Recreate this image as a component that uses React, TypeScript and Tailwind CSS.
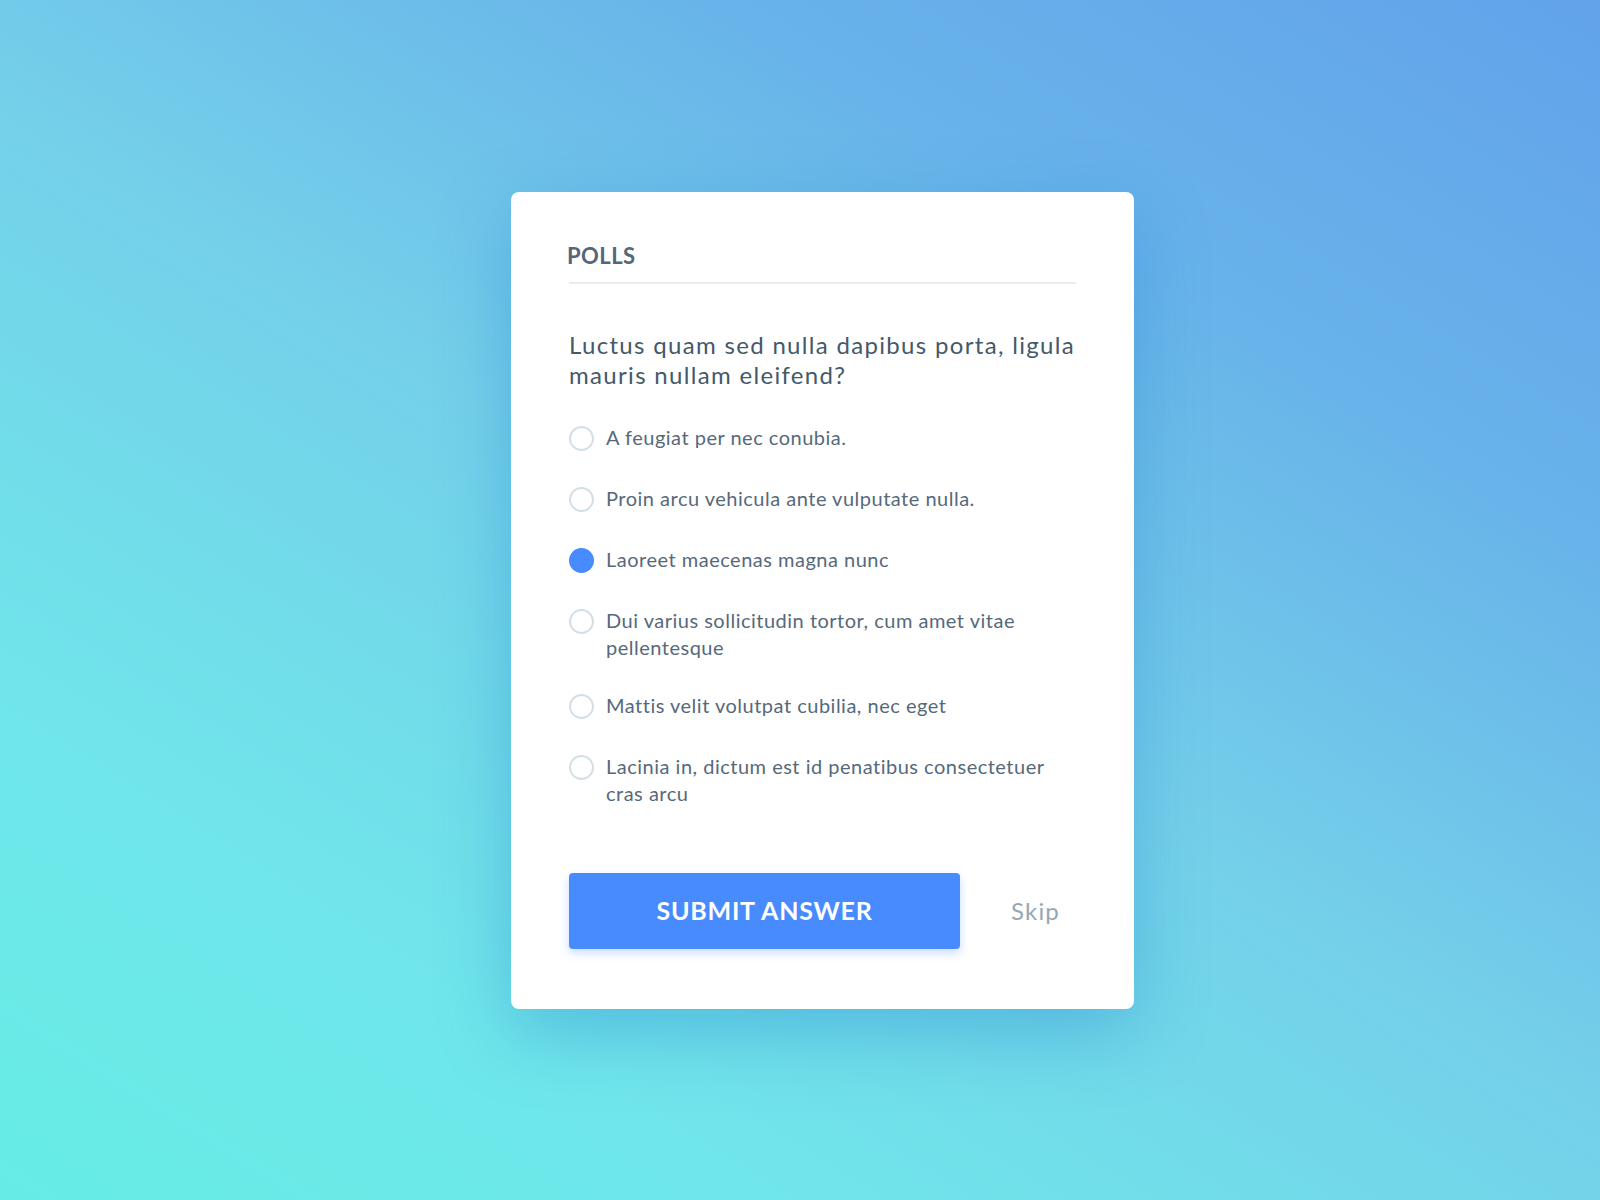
import { useState } from "react";

const options = [
  "A feugiat per nec conubia.",
  "Proin arcu vehicula ante vulputate nulla.",
  "Laoreet maecenas magna nunc",
  "Dui varius sollicitudin tortor, cum amet vitae pellentesque",
  "Mattis velit volutpat cubilia, nec eget",
  "Lacinia in, dictum est id penatibus consectetuer cras arcu",
];

export default function App() {
  const [selected, setSelected] = useState(2);

  return (
    <div className="min-h-[1200px] w-full flex items-center justify-center pl-[45px] bg-[linear-gradient(32deg,#66ece6_0%,#6fe6ea_22%,#74d0e9_50%,#68b3ea_75%,#62a3ea_100%)] font-['Lato','Noto_Sans',sans-serif]">
      <div className="w-[623px] bg-white rounded-lg px-[58px] pt-[50px] pb-[60px] shadow-[0_24px_70px_rgba(30,120,200,0.35)]">
        <div className="border-b-2 border-[#e8ecf0] pb-3">
          <h2 className="text-[22px] leading-[28px] font-bold text-[#52677a] tracking-[0.02em] -ml-[2px]">
            POLLS
          </h2>
        </div>

        <p className="mt-[46px] text-[24px] leading-[30px] text-[#44596a] tracking-[0.055em]">
          Luctus quam sed nulla dapibus porta, ligula mauris nullam eleifend?
        </p>

        <ul className="mt-[34px] flex flex-col gap-[31px]">
          {options.map((opt, idx) => (
            <li
              key={opt}
              className="flex items-start gap-[12px] cursor-pointer"
              onClick={() => setSelected(idx)}
            >
              <span
                className={`mt-[2px] mb-[3px] shrink-0 w-[25px] h-[25px] rounded-full ${
                  idx === selected
                    ? "bg-[#488bff]"
                    : "border-2 border-[#d3dfe6] bg-white"
                }`}
              />
              <span className="text-[20px] leading-[27px] text-[#56697a] tracking-[0.025em]">
                {opt}
              </span>
            </li>
          ))}
        </ul>

        <div className="mt-[66px] flex items-center">
          <button className="w-[391px] h-[76px] rounded bg-[#488bff] text-white text-[25px] font-bold tracking-[0.03em] shadow-[0_4px_10px_rgba(72,139,255,0.3)]">
            SUBMIT ANSWER
          </button>
          <button className="ml-[51px] text-[24px] text-[#97a7b2] tracking-[0.05em]">
            Skip
          </button>
        </div>
      </div>
    </div>
  );
}
